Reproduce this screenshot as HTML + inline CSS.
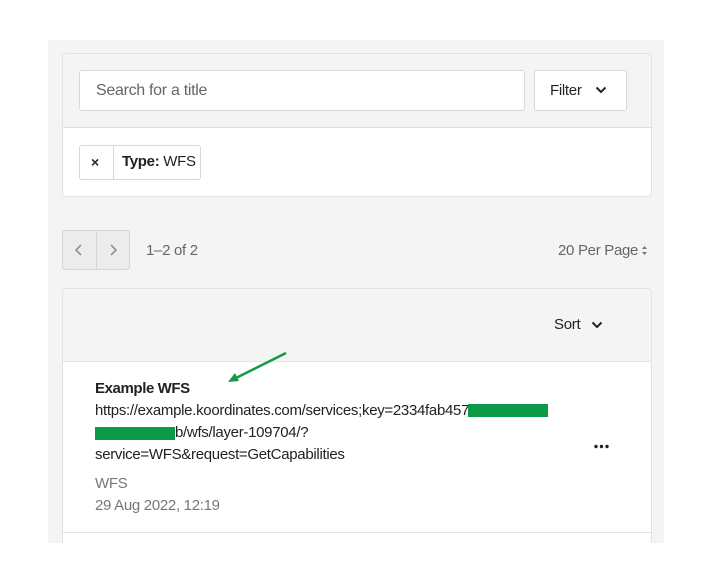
<!DOCTYPE html>
<html><head><style>
*{box-sizing:border-box;margin:0;padding:0}
body{width:720px;height:569px;background:#fff;position:relative;font-family:"Liberation Sans",sans-serif;color:#222;overflow:hidden}
.a{position:absolute}
.t{position:absolute;white-space:nowrap;font-size:15px;letter-spacing:-0.3px;line-height:18px}
</style></head><body>
<div class="a" style="left:48px;top:40px;width:616px;height:503px;background:#f4f4f4"></div>
<div class="a" style="left:62px;top:53px;width:590px;height:144px;background:#fff;border:1px solid #e2e2e2;border-radius:4px;overflow:hidden">
 <div class="a" style="left:0;top:0;width:590px;height:74px;background:#f4f4f4;border-bottom:1px solid #ddd"></div>
</div>
<div class="a" style="left:79px;top:70px;width:446px;height:41px;background:#fff;border:1px solid #d8d8d8;border-radius:3px"></div>
<div class="t" style="left:96px;top:82px;font-size:16px;color:#666">Search for a title</div>
<div class="a" style="left:534px;top:70px;width:93px;height:41px;background:#fff;border:1px solid #d8d8d8;border-radius:3px"></div>
<div class="t" style="left:550px;top:82px;color:#222">Filter</div>
<svg class="a" style="left:595px;top:86px" width="12" height="8"><path d="M1.5 1.5L6 6L10.5 1.5" stroke="#222" stroke-width="2" fill="none"/></svg>
<div class="a" style="left:79px;top:145px;width:122px;height:35px;background:#fff;border:1px solid #d8d8d8;border-radius:3px"></div>
<div class="a" style="left:113px;top:145px;width:1px;height:35px;background:#d8d8d8"></div>
<div class="t" style="left:91px;top:153px;font-weight:bold;font-size:14px">×</div>
<div class="t" style="left:122px;top:153px"><b>Type:</b> WFS</div>
<div class="a" style="left:62px;top:230px;width:68px;height:40px;background:#ececec;border:1px solid #d4d4d4;border-radius:3px"></div>
<div class="a" style="left:96px;top:230px;width:1px;height:40px;background:#d4d4d4"></div>
<svg class="a" style="left:74px;top:244px" width="10" height="12"><path d="M7 1L2 6L7 11" stroke="#888" stroke-width="1.5" fill="none"/></svg>
<svg class="a" style="left:108px;top:244px" width="10" height="12"><path d="M3 1L8 6L3 11" stroke="#888" stroke-width="1.5" fill="none"/></svg>
<div class="t" style="left:146px;top:242px;color:#666">1–2 of 2</div>
<div class="t" style="left:558px;top:242px;color:#666">20 Per Page</div>
<svg class="a" style="left:641px;top:245px" width="7" height="11"><path d="M1 4L3.5 1L6 4ZM1 7L3.5 10L6 7Z" fill="#777"/></svg>
<div class="a" style="left:62px;top:288px;width:590px;height:260px;background:#fff;border:1px solid #e2e2e2;border-radius:4px;overflow:hidden">
 <div class="a" style="left:0;top:0;width:590px;height:73px;background:#f4f4f4;border-bottom:1px solid #e4e4e4"></div>
 <div class="a" style="left:0;top:243px;width:590px;height:1px;background:#e4e4e4"></div>
</div>
<div class="t" style="left:554px;top:316px">Sort</div>
<svg class="a" style="left:591px;top:321px" width="12" height="8"><path d="M1.5 1.5L6 6L10.5 1.5" stroke="#222" stroke-width="2" fill="none"/></svg>
<svg class="a" style="left:224px;top:350px" width="66" height="36"><path d="M62 3L10 29" stroke="#129a44" stroke-width="2.5"/><path d="M4 32L11 23L15 31Z" fill="#129a44"/></svg>
<div class="t" style="left:95px;top:380px;font-weight:bold;letter-spacing:-0.4px">Example WFS</div>
<div class="t" style="left:95px;top:402px">https://example.koordinates.com/services;key=2334fab457</div>
<div class="a" style="left:468px;top:404px;width:80px;height:13px;background:#0a9a48"></div>
<div class="a" style="left:95px;top:427px;width:80px;height:13px;background:#0a9a48"></div>
<div class="t" style="left:175px;top:424px">b/wfs/layer-109704/?</div>
<div class="t" style="left:95px;top:446px">service=WFS&amp;request=GetCapabilities</div>
<div class="t" style="left:95px;top:475px;color:#777">WFS</div>
<div class="t" style="left:95px;top:497px;color:#777">29 Aug 2022, 12:19</div>
<svg class="a" style="left:594px;top:444px" width="16" height="5"><circle cx="2" cy="2.5" r="1.7" fill="#222"/><circle cx="7.5" cy="2.5" r="1.7" fill="#222"/><circle cx="13" cy="2.5" r="1.7" fill="#222"/></svg>
<div class="a" style="left:0;top:543px;width:720px;height:26px;background:#fff"></div>
</body></html>
